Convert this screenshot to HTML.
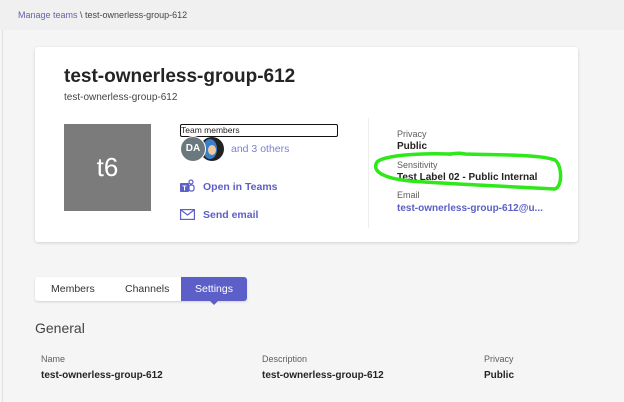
<!DOCTYPE html><html><head><style>
body{margin:0;width:624px;height:402px;background:#f5f5f5;font-family:"Liberation Sans",sans-serif;position:relative;overflow:hidden;color:#252423}
.a{position:absolute;white-space:nowrap}
.top{position:absolute;left:0;top:0;width:624px;height:30px;background:#f0f0f0}
.lb{position:absolute;left:2px;top:30px;width:1px;height:372px;background:#e0e0e0}
.card{position:absolute;left:35px;top:47px;width:543px;height:195px;background:#fff;box-shadow:0 1px 3px rgba(0,0,0,.15);border-radius:3px}
.lbl{font-size:9px;color:#605e5c}
.val{font-size:10px;font-weight:bold;color:#252423}
.lnk{color:#5b5fc7}
</style></head><body>
<div class="top"></div><div class="lb"></div>
<div class="a" style="left:18px;top:10px;font-size:9px;color:#444"><span class="lnk" style="color:#6264a7">Manage teams</span> \ test-ownerless-group-612</div>
<div class="card"></div>
<div class="a" style="left:64px;top:66px;font-size:19px;font-weight:bold">test-ownerless-group-612</div>
<div class="a" style="left:64px;top:92px;font-size:10px;color:#444">test-ownerless-group-612</div>
<div class="a" style="left:64px;top:124px;width:87px;height:87px;background:#7b7b7b;color:#fff;font-size:26px;text-align:center;line-height:87px">t6</div>
<div class="a" style="left:180px;top:124px;width:156px;height:11px;border:1.5px solid #111;border-radius:2px;font-size:8.5px;line-height:11px">Team members</div>
<div class="a" style="left:200px;top:137px;width:24px;height:24px;border-radius:50%;background:#222;overflow:hidden"><div style="position:absolute;left:3px;top:2px;width:14px;height:20px;background:#3a7fc8;border-radius:50%"></div><div style="position:absolute;left:8px;top:8px;width:8px;height:10px;background:#f1c9a0;border-radius:50%"></div></div>
<div class="a" style="left:181px;top:137px;width:24px;height:24px;border-radius:50%;background:#69797e;color:#fff;font-size:10px;font-weight:bold;text-align:center;line-height:24px;border:1px solid #fff;margin:-1px">DA</div>
<div class="a lnk" style="left:231px;top:143px;font-size:10.5px;color:#7b7fd4">and 3 others</div>
<svg class="a" style="left:180px;top:179px" width="15" height="15" viewBox="0 0 15 15"><circle cx="11" cy="3" r="2" fill="none" stroke="#5b5fc7" stroke-width="1.2"/><rect x="9" y="6" width="5" height="6" rx="2" fill="none" stroke="#5b5fc7" stroke-width="1.2"/><rect x="0" y="4" width="9" height="9" rx="1" fill="#5b5fc7"/><text x="4.5" y="11.5" font-size="7" font-weight="bold" fill="#fff" text-anchor="middle" font-family="Liberation Sans">T</text></svg>
<div class="a lnk" style="left:203px;top:181px;font-size:10.5px;font-weight:bold">Open in Teams</div>
<svg class="a" style="left:180px;top:209px" width="15" height="11" viewBox="0 0 15 11"><rect x="0.6" y="0.6" width="13.8" height="9.8" fill="none" stroke="#5b5fc7" stroke-width="1.2"/><path d="M1 1l6.5 5 6.5-5" fill="none" stroke="#5b5fc7" stroke-width="1.2"/></svg>
<div class="a lnk" style="left:203px;top:209px;font-size:10.5px;font-weight:bold">Send email</div>
<div class="a" style="left:368px;top:118px;width:1px;height:110px;background:#eee"></div>
<div class="a lbl" style="left:397px;top:129px">Privacy</div>
<div class="a val" style="left:397px;top:141px">Public</div>
<div class="a lbl" style="left:397px;top:160px">Sensitivity</div>
<div class="a val" style="left:397px;top:172px">Test Label 02 - Public Internal</div>
<div class="a lbl" style="left:397px;top:190px">Email</div>
<div class="a val lnk" style="left:397px;top:203px;color:#5b5fc7">test-ownerless-group-612@u...</div>
<svg class="a" style="left:370px;top:150px" width="195" height="50" viewBox="0 0 195 50"><path d="M80 4C50 3 15 5 7 12C2 20 10 28 40 31C80 34 150 37 185 39C193 36 192 15 185 10C170 4 120 5 95 4C85 2 78 5 80 4" fill="none" stroke="#2ee81a" stroke-width="3.5" stroke-linecap="round"/></svg>
<div class="a" style="left:35px;top:277px;width:212px;height:24px;background:#fff;box-shadow:0 1px 2px rgba(0,0,0,.15);border-radius:3px"></div>
<div class="a" style="left:51px;top:283px;font-size:10.5px;color:#333">Members</div>
<div class="a" style="left:125px;top:283px;font-size:10.5px;color:#333">Channels</div>
<div class="a" style="left:181px;top:277px;width:66px;height:24px;background:#5b5fc7;border-radius:0 3px 3px 0;color:#fff;font-size:10.5px;text-align:center;line-height:24px">Settings</div>
<div class="a" style="left:209px;top:300px;width:0;height:0;border-left:5px solid transparent;border-right:5px solid transparent;border-top:5px solid #5b5fc7"></div>
<div class="a" style="left:35px;top:320px;font-size:14px;color:#444">General</div>
<div class="a lbl" style="left:41px;top:354px">Name</div>
<div class="a val" style="left:41px;top:370px">test-ownerless-group-612</div>
<div class="a lbl" style="left:262px;top:354px">Description</div>
<div class="a val" style="left:262px;top:370px">test-ownerless-group-612</div>
<div class="a lbl" style="left:484px;top:354px">Privacy</div>
<div class="a val" style="left:484px;top:370px">Public</div>
</body></html>
